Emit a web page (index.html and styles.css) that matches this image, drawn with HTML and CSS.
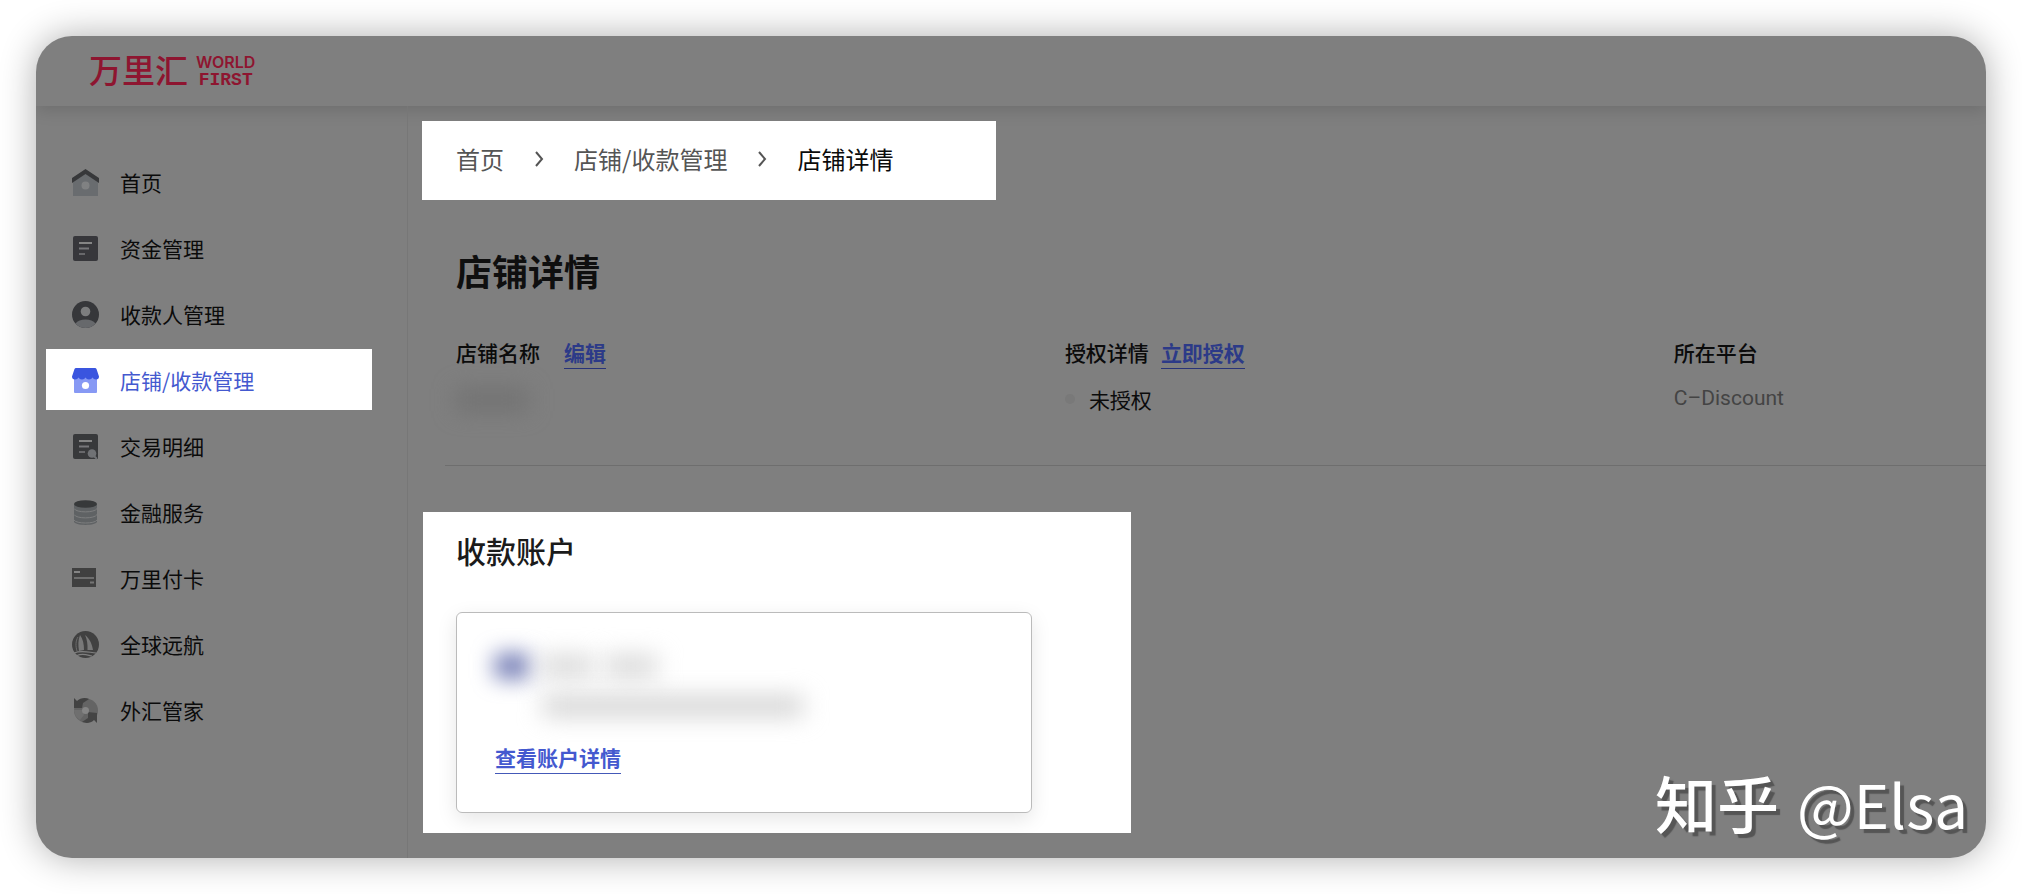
FILE: index.html
```html
<!DOCTYPE html>
<html lang="zh-CN">
<head>
<meta charset="utf-8">
<title>店铺详情</title>
<link rel="stylesheet" href="styles.css">
</head>
<body>
<div class="frame">
  <header class="topbar">
    <div class="logo">
      <span class="logo-cn">万里汇</span>
      <span class="logo-en"><span class="logo-world">WORLD</span><span class="logo-first">FIRST</span></span>
    </div>
  </header>
  <div class="body">
    <nav class="sidebar">
      <a class="item" href="#">
        <svg class="icon" viewBox="0 0 27 27"><path d="M1 10 13.500 2 26 10V27H1z" fill="#696c6f"/><path d="M0 9 13.500 0 27 9V14L13.500 5 0 14z" fill="#37383a"/><circle cx="13.500" cy="16.500" r="4" fill="#808182"/></svg>
        首页</a>
      <a class="item" href="#">
        <svg class="icon" viewBox="0 0 27 27"><rect x="1" y="1" width="25" height="25" rx="2" fill="#37373b"/><path d="M7 8H20" stroke="#858585" stroke-width="2"/><path d="M7 13.500H17" stroke="#77777a" stroke-width="2"/><path d="M7 19H13" stroke="#68686b" stroke-width="2"/></svg>
        资金管理</a>
      <a class="item" href="#">
        <svg class="icon" viewBox="0 0 27 27"><circle cx="13.500" cy="13.500" r="13.500" fill="#36373a"/><circle cx="13.500" cy="10.500" r="4.800" fill="#7c7d7e"/><path d="M3.500 22.500C7 17 20 17 23.500 22.500C18 28.500 9 28.500 3.500 22.500z" fill="#67696c"/></svg>
        收款人管理</a>
      <a class="item active" href="#" aria-current="page">
        <svg class="icon" viewBox="0 0 27 27"><path d="M2 9H25V25Q25 26 24 26H3Q2 26 2 25z" fill="#8799f4"/><path d="M4 1H23Q24 1 24.500 2L27 9.500Q27 12.500 24 12.500Q21.500 12.500 20.500 10.500Q19.500 12.500 17 12.500Q14.500 12.500 13.500 10.500Q12.500 12.500 10 12.500Q7.500 12.500 6.500 10.500Q5.500 12.500 3 12.500Q0 12.500 0 9.500L2.500 2Q3 1 4 1z" fill="#3a55df"/><circle cx="13.500" cy="18.500" r="3.600" fill="#fff"/></svg>
        店铺/收款管理</a>
      <a class="item" href="#">
        <svg class="icon" viewBox="0 0 27 27"><path d="M3 1H24Q26 1 26 3V26H3Q1 26 1 24V3Q1 1 3 1z" fill="#38393b"/><path d="M7 8H20" stroke="#858585" stroke-width="2"/><path d="M7 13.500H17" stroke="#77777a" stroke-width="2"/><path d="M7 19H13" stroke="#68686b" stroke-width="2"/><circle cx="20" cy="20.500" r="4.300" fill="#707275"/><path d="M22 23 25 26" stroke="#707275" stroke-width="2"/></svg>
        交易明细</a>
      <a class="item" href="#">
        <svg class="icon" viewBox="0 0 27 27"><path d="M2 5V22.500C2 27 25 27 25 22.500V5z" fill="#5f6264"/><path d="M2 9.500C4 14 23 14 25 9.500M2 15.500C4 20 23 20 25 15.500M2 21C4 25 23 25 25 21" fill="none" stroke="#7d7e7f"/><ellipse cx="13.500" cy="5" rx="11.500" ry="3.800" fill="#37393a"/></svg>
        金融服务</a>
      <a class="item" href="#">
        <svg class="icon" viewBox="0 0 27 27"><path d="M0 3H24V22H0z" fill="#404040"/><path d="M2 7H8" stroke="#858585" stroke-width="2"/><path d="M2 13H22" stroke="#6e6e6e" stroke-width="2"/><path d="M18 17.500H22" stroke="#757575" stroke-width="2"/></svg>
        万里付卡</a>
      <a class="item" href="#">
        <svg class="icon" viewBox="0 0 27 27"><circle cx="13.500" cy="13.500" r="13.500" fill="#414141"/><path d="M8 4C11 8 12 13 12 19L7 20C6 14 6 9 8 4zM13 4C18 8 20 13 21 19L15.500 19C15.800 13 15 8 13 4z" fill="#787878"/><path d="M6 6C3.500 10 3.500 15 5 20" fill="none" stroke="#6c6c6c"/><path d="M2 22C9 19 15 21 24 22M5 24.500C11 22 15 24 20 25" fill="none" stroke="#808080" stroke-width="1.200"/></svg>
        全球远航</a>
      <a class="item" href="#">
        <svg class="icon" viewBox="0 0 27 27"><circle cx="14" cy="13.500" r="12" fill="#646464"/><path d="M2 11V1L5 4C8 1 13 0 17 2L11 6 10 11z" fill="#424242"/><path d="M25 16V26L22 23C18 27 13 26 10 25L16 21V15z" fill="#444"/><path d="M2 13A12 12 0 0 0 8 23L12 18 10 13z" fill="#6f6f6f"/><circle cx="13.500" cy="13.500" r="3.500" fill="#858585"/></svg>
        外汇管家</a>
    </nav>
    <main class="main">
      <nav class="crumbs" aria-label="breadcrumb">
        <a href="#">首页</a>
        <svg class="chev" viewBox="0 0 10 18"><path d="M2 2 8 9 2 16" fill="none" stroke="#555" stroke-width="2"/></svg>
        <a href="#">店铺/收款管理</a>
        <svg class="chev" viewBox="0 0 10 18"><path d="M2 2 8 9 2 16" fill="none" stroke="#555" stroke-width="2"/></svg>
        <span class="current">店铺详情</span>
      </nav>
      <h1 class="title">店铺详情</h1>
      <section class="info">
        <div>
          <div class="label">店铺名称<a class="link edit" href="#">编辑</a></div>
          <div class="masked-name"></div>
        </div>
        <div>
          <div class="label">授权详情<a class="link" href="#">立即授权</a></div>
          <div class="value status"><span class="dot"></span>未授权</div>
        </div>
        <div>
          <div class="label">所在平台</div>
          <div class="value platform">C–Discount</div>
        </div>
      </section>
      <section class="accounts">
        <h2 class="subtitle">收款账户</h2>
        <div class="card">
          <div class="masked-row"><span class="masked-flag"></span><span class="masked-text"></span><span class="masked-text"></span></div>
          <div class="masked-line"></div>
          <a class="link" href="#">查看账户详情</a>
        </div>
      </section>
    </main>
  </div>
  <div class="watermark"><span class="zhihu">知乎</span><span>@Elsa</span></div>
</div>
</body>
</html>
```

FILE: styles.css
```css
* { box-sizing: border-box; }
body {
  margin: 0;
  padding: 36px;
  overflow-x: hidden;
  background: #fff;
  color: #0b0b0b;
  font-family: "Noto Sans CJK SC", sans-serif;
  font-size: 21px;
  line-height: 32px;
}
a { color: inherit; text-decoration: none; }
.frame {
  position: relative;
  display: flex;
  flex-direction: column;
  min-height: calc(100vh - 72px);
  overflow: hidden;
  background: #7f7f7f;
  border-radius: 36px;
  box-shadow: 0 0 36px rgba(0, 0, 0, 0.32);
}
.topbar {
  display: flex;
  align-items: center;
  height: 70px;
  padding: 0 53px 4px;
  box-shadow: 0 4px 16px rgba(0, 0, 0, 0.14);
}
.logo { display: flex; align-items: center; gap: 8px; color: #8e1530; }
.logo-cn { font-size: 33px; line-height: 40px; font-weight: 500; }
.logo-en {
  display: grid;
  justify-items: center;
  padding-top: 4px;
  font: 600 16px/18px Inter, sans-serif;
}
.logo-first { font: 700 18px/18px "Liberation Mono", monospace; }
.body { display: flex; flex: 1; }
.sidebar {
  display: flex;
  flex-direction: column;
  flex: none;
  gap: 5px;
  width: 372px;
  padding: 45px 35px 0 10px;
  border-right: 1px solid #777;
}
.item {
  display: flex;
  align-items: center;
  gap: 21px;
  height: 61px;
  padding-left: 26px;
}
.item.active { background: #fff; color: #4459cf; }
.icon { width: 27px; height: 29px; padding-top: 2px; }
.main { flex: 1; min-width: 0; padding: 15px 0 25px 14px; }
.crumbs {
  display: flex;
  align-items: center;
  gap: 30px;
  width: 574px;
  max-width: 100%;
  height: 79px;
  padding: 0 0 3px 34px;
  background: #fff;
  color: #555;
  font-size: 24px;
}
.chev { width: 10px; height: 18px; }
.current { color: #0b0b0b; }
.title {
  margin: 44px 0 0 34px;
  font-size: 36px;
  line-height: 52px;
  font-weight: 700;
  color: #0f0f0f;
}
.info {
  display: grid;
  grid-template-columns: 39fr 39fr 20fr;
  margin-left: 23px;
  padding: 40px 0 50px 11px;
  border-bottom: 1px solid #6e6e6e;
}
.label { font-weight: 500; margin-bottom: 14px; }
.link {
  display: inline-block;
  line-height: 31px;
  border-bottom: 1px solid #283378;
  color: #2c3a88;
  font-weight: 700;
}
.label .link { margin-left: 12px; }
.label .edit { margin-left: 24px; }
.value { line-height: 32px; }
.status { display: flex; align-items: center; gap: 14px; }
.dot { width: 10px; height: 10px; border-radius: 50%; background: #797979; }
.platform { font-family: Roboto, sans-serif; color: #444; }
.masked-name {
  width: 72px;
  height: 22px;
  margin-top: 20px;
  background: #727272;
  filter: blur(11px);
}
.accounts {
  width: 708px;
  max-width: 100%;
  margin: 46px 0 0 1px;
  padding: 16px 99px 20px 33px;
  background: #fff;
}
.subtitle {
  margin: 0 0 40px;
  font-size: 30px;
  line-height: 44px;
  font-weight: 500;
  color: #1b1b1b;
}
.card {
  height: 201px;
  padding: 40px 38px;
  border: 1px solid #bbb;
  border-radius: 6px;
  box-shadow: 0 6px 20px rgba(0, 0, 0, 0.1);
}
.card .link { color: #4459cf; border-color: #4459b8; }
.masked-row { display: flex; align-items: center; gap: 12px; height: 26px; }
.masked-flag { width: 34px; height: 24px; background: #6670ae; filter: blur(11px); }
.masked-text { width: 52px; height: 20px; background: #d4d4d4; filter: blur(12px); }
.masked-line {
  width: 260px;
  height: 18px;
  margin: 18px 0 26px 48px;
  background: #ccc;
  filter: blur(12px);
}
.watermark {
  position: absolute;
  right: 18px;
  bottom: 11px;
  display: flex;
  align-items: baseline;
  gap: 18px;
  color: #fff;
  font-size: 60px;
  line-height: 88px;
  text-shadow: 4px 4px 1px #555;
}
.zhihu { font-size: 62px; font-weight: 500; }
```
